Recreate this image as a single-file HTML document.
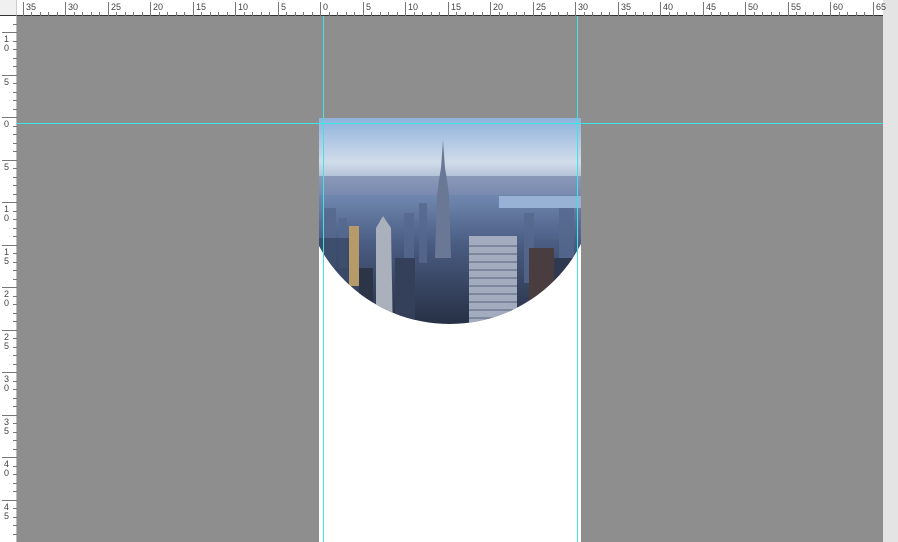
<!DOCTYPE html>
<html style="width:898px;height:542px;overflow:hidden"><head><meta charset="utf-8"><style>
*{margin:0;padding:0;box-sizing:border-box}
body{width:898px;height:542px;overflow:hidden;background:#8e8e8e;font-family:"Liberation Sans",sans-serif;position:relative}
#top{position:absolute;left:0;top:0;width:883px;height:16px;background:#fff;border-bottom:1px solid #333}
#left{position:absolute;left:0;top:0;width:17px;height:542px;background:#fff;border-right:1px solid #bbb}
#corner{position:absolute;left:0;top:0;width:17px;height:16px;background:#f0f0f0;border-right:1px solid #ccc;border-bottom:1px solid #333}
#scroll{position:absolute;left:883px;top:0;width:15px;height:542px;background:#e4e4e4}
.t{position:absolute;background:#777}
.lb{position:absolute;font-size:9px;color:#444;line-height:9px}
.g{position:absolute;background:#3fe4e4}
</style></head><body>
<div id="top"></div><div id="left"></div><div id="corner"></div><div id="scroll"></div>
<svg style="position:absolute;left:319px;top:118px" width="262" height="424">
<defs>
<clipPath id="c"><circle cx="130.5" cy="58" r="148"/></clipPath>
<linearGradient id="sky" x1="0" y1="0" x2="0" y2="1">
<stop offset="0" stop-color="#8fb2dc"/><stop offset="0.55" stop-color="#d0dcea"/><stop offset="1" stop-color="#8a9dbd"/></linearGradient>
<linearGradient id="city" x1="0" y1="0" x2="0" y2="1">
<stop offset="0" stop-color="#7088b0"/><stop offset="0.35" stop-color="#4a5c82"/><stop offset="1" stop-color="#222a3c"/></linearGradient>
</defs>
<rect width="262" height="424" fill="#fff"/>
<g clip-path="url(#c)">
<rect x="0" y="0" width="262" height="80" fill="url(#sky)"/>
<rect x="0" y="58" width="262" height="20" fill="#6676a0" opacity="0.55"/>
<rect x="0" y="77" width="262" height="140" fill="url(#city)"/>
<rect x="180" y="78" width="82" height="12" fill="#98b2d6"/>
<g fill="#56688e" opacity="0.8">
<rect x="5" y="90" width="12" height="60"/><rect x="20" y="100" width="8" height="50"/><rect x="85" y="95" width="10" height="60"/><rect x="100" y="85" width="8" height="60"/><rect x="205" y="95" width="10" height="70"/><rect x="240" y="90" width="15" height="80"/></g>
<polygon points="118,77 120,62 122,50 123,36 124,22 125,36 126,50 128,62 130,77 132,140 116,140" fill="#6a7896"/>
<rect x="150" y="118" width="48" height="100" fill="#a2acbe"/>
<g stroke="#55607a" stroke-width="1">
<line x1="150" y1="128" x2="198" y2="128"/><line x1="150" y1="136" x2="198" y2="136"/><line x1="150" y1="144" x2="198" y2="144"/><line x1="150" y1="152" x2="198" y2="152"/><line x1="150" y1="160" x2="198" y2="160"/><line x1="150" y1="168" x2="198" y2="168"/><line x1="150" y1="176" x2="198" y2="176"/><line x1="150" y1="184" x2="198" y2="184"/><line x1="150" y1="192" x2="198" y2="192"/><line x1="150" y1="200" x2="198" y2="200"/></g>
<polygon points="57,220 57,110 64,98 72,110 74,220" fill="#aab0bc"/>
<rect x="30" y="108" width="10" height="60" fill="#b79a6a"/>
<rect x="76" y="140" width="20" height="80" fill="#34405a"/>
<rect x="40" y="150" width="14" height="70" fill="#2c3448"/>
<rect x="210" y="130" width="25" height="70" fill="#4a3d3f"/>
<rect x="235" y="140" width="27" height="60" fill="#2f3a50"/>
<rect x="0" y="120" width="30" height="100" fill="#3a4866" opacity="0.8"/>
</g>
</svg>
<div class="g" style="left:323px;top:16px;width:1px;height:526px"></div>
<div class="g" style="left:577px;top:16px;width:1px;height:526px"></div>
<div class="g" style="left:17px;top:123px;width:866px;height:1px"></div>
<div id="ticks"></div>
<script>
var h='',s=42.5,i,x,y,n;
for(i=-8;i<=13;i++){x=320+i*s;if(x<18||x>880)continue;
 h+='<div class="t" style="left:'+Math.round(x)+'px;top:2px;width:1px;height:14px"></div>';
 h+='<div class="lb" style="left:'+(Math.round(x)+3)+'px;top:3px">'+Math.abs(i*5)+'</div>';
 for(n=1;n<5;n++){var xx=x+n*s/5;if(xx<18||xx>880)continue;h+='<div class="t" style="left:'+Math.round(xx)+'px;top:12px;width:1px;height:4px"></div>';}}
for(i=-2;i<=9;i++){y=117+i*s;if(y<18||y>530)continue;
 h+='<div class="t" style="left:2px;top:'+Math.round(y)+'px;width:15px;height:1px"></div>';
 var t=String(Math.abs(i*5)).split('').join('<br>');
 h+='<div class="lb" style="left:4px;top:'+(Math.round(y)+3)+'px">'+t+'</div>';
 for(n=1;n<5;n++){var yy=y+n*s/5;if(yy<18||yy>540)continue;h+='<div class="t" style="left:13px;top:'+Math.round(yy)+'px;width:4px;height:1px"></div>';}}
for(n=1;n<5;n++){var yy=117-3*s+n*s/5;if(yy>18)h+='<div class="t" style="left:13px;top:'+Math.round(yy)+'px;width:4px;height:1px"></div>';}
document.getElementById('ticks').innerHTML=h;
</script>
</body></html>
